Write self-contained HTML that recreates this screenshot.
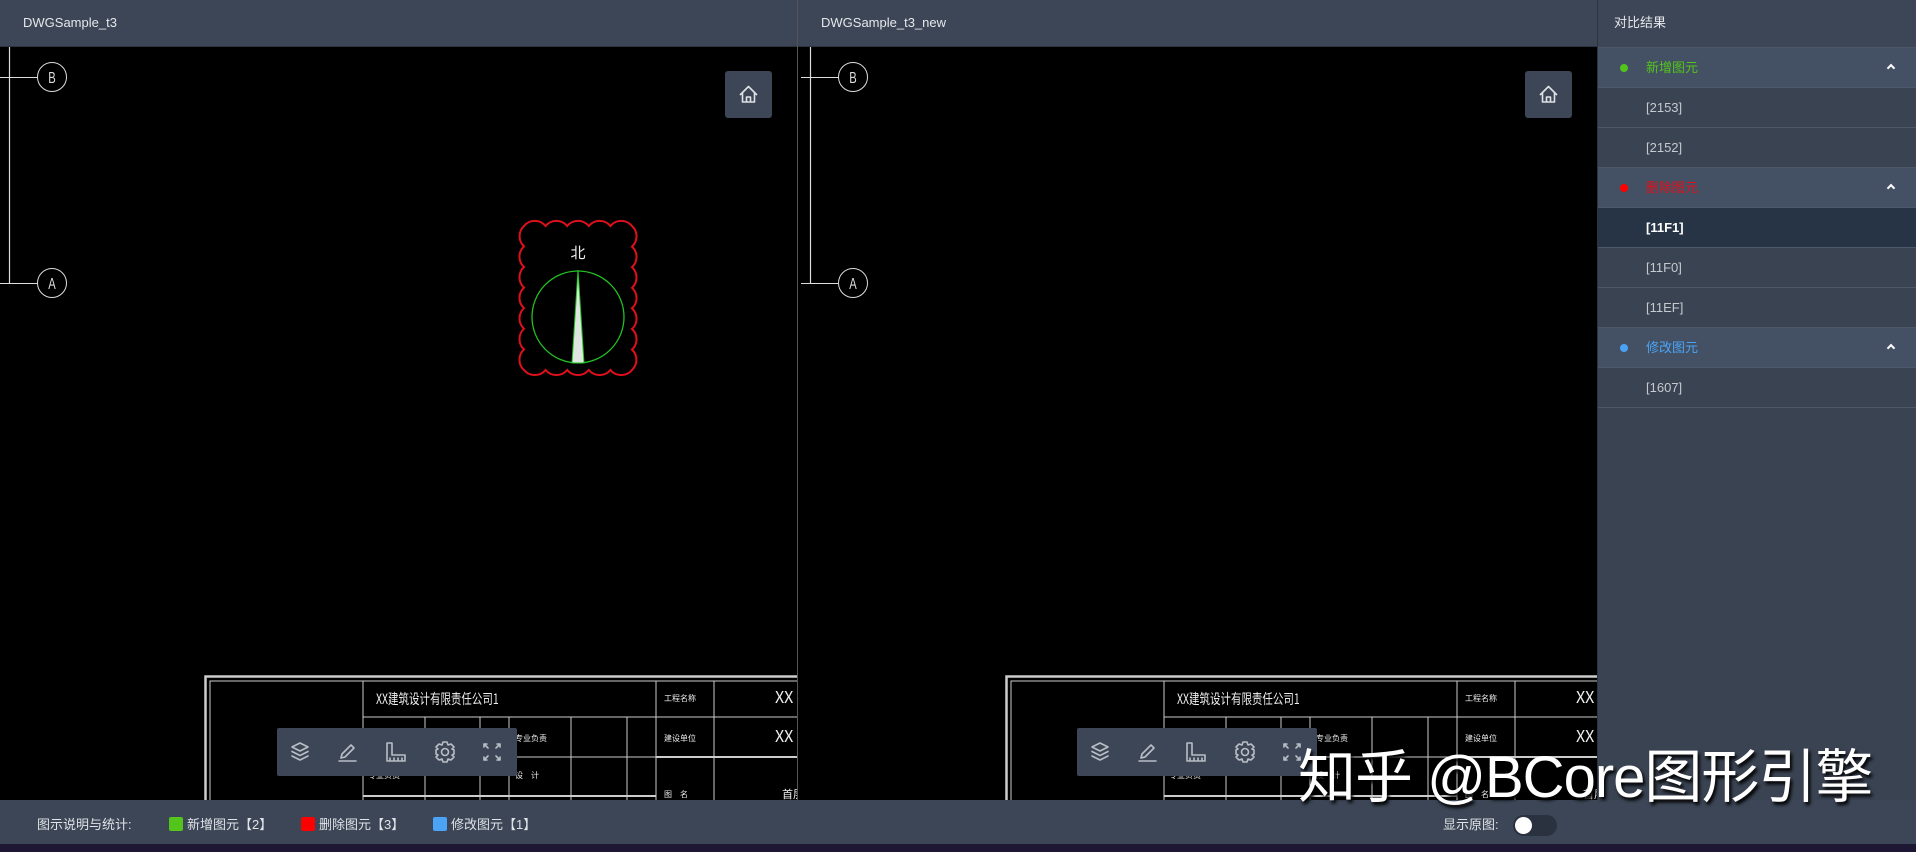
<!DOCTYPE html>
<html><head><meta charset="utf-8">
<style>
*{margin:0;padding:0;box-sizing:border-box}
body{width:1916px;height:852px;overflow:hidden;background:#000;font-family:"Liberation Sans","Noto Sans CJK SC",sans-serif;position:relative}
.hdr{position:absolute;top:0;height:47px;background:#3c4656;color:#e6e8eb;font-size:13px;line-height:46px;padding-left:23px;border-bottom:1px solid #2c3440}
.canvas{position:absolute;top:47px;height:753px;overflow:hidden;background:#000}
.home{position:absolute;width:47px;height:47px;background:#3c4656;border-radius:3px}
.tb{position:absolute;left:277px;top:681px;width:240px;height:48px;background:#3c4656;border-radius:2px}
.side{position:absolute;left:1597px;top:0;width:319px;height:800px;background:#3a4352;border-left:1px solid #2c3440}
.side .h{height:48px;line-height:46px;padding-left:16px;color:#e6e8eb;font-size:13px;background:#3c4656;border-bottom:1px solid #4b5666}
.row{height:40px;line-height:39px;border-bottom:1px solid #4d5868;font-size:13px;position:relative;padding-left:48px;color:#c6cad0}
.grp{background:#445164}
.grp .dot{position:absolute;left:22px;top:16px;width:8px;height:8px;border-radius:50%}
.grp .ch{position:absolute;right:22px;top:17px;width:6px;height:6px;border-left:2px solid #fff;border-top:2px solid #fff;transform:rotate(45deg)}
.sel{background:#273446;color:#fff;font-weight:bold}
.bot{position:absolute;left:0;top:800px;width:1916px;height:44px;background:#3c4656;color:#e0e3e7;font-size:13px}
.strip{position:absolute;left:0;top:844px;width:1916px;height:8px;background:#1d1733}
.sq{display:inline-block;width:14px;height:14px;vertical-align:-2px;margin-right:4px;border-radius:2px}
.wm{position:absolute;left:1298px;top:730px;font-size:58px;color:#fff;text-shadow:2px 3px 3px #000;white-space:nowrap;letter-spacing:-1px}
</style></head><body>

<div class="hdr" style="left:0;width:797px">DWGSample_t3</div>
<div class="hdr" style="left:798px;width:799px">DWGSample_t3_new</div>
<div style="position:absolute;left:797px;top:0;width:1px;height:800px;background:#555"></div>

<!-- left canvas -->
<div class="canvas" style="left:0;width:797px">
<svg width="797" height="753" viewBox="0 47 797 753" style="position:absolute;left:0;top:0">
<g id="base">
<line x1="9.5" y1="47" x2="9.5" y2="283" stroke="#ddd" stroke-width="1.2"/>
<line x1="0" y1="77.5" x2="38" y2="77.5" stroke="#ddd"/>
<line x1="0" y1="283.5" x2="38" y2="283.5" stroke="#ddd"/>
<circle cx="52" cy="77" r="14.5" fill="none" stroke="#ddd"/>
<circle cx="52" cy="283" r="14.5" fill="none" stroke="#ddd"/>
<text x="52" y="83" fill="#ddd" font-size="16" text-anchor="middle" transform="translate(52 0) scale(.7 1) translate(-52 0)">B</text>
<text x="52" y="289" fill="#ddd" font-size="16" text-anchor="middle" transform="translate(52 0) scale(.7 1) translate(-52 0)">A</text>
<g stroke="#ccc" fill="none">
<rect x="205.5" y="676.5" width="700" height="200" stroke-width="2.5"/>
<rect x="210" y="681" width="700" height="200" stroke-width="1"/>
<line x1="363" y1="681" x2="363" y2="800"/>
<line x1="656" y1="681" x2="656" y2="800"/>
<line x1="714" y1="681" x2="714" y2="800"/>
<line x1="363" y1="717" x2="800" y2="717"/>
<line x1="656" y1="757" x2="800" y2="757" stroke-width="2"/>
<line x1="363" y1="796" x2="656" y2="796" stroke-width="2"/>
<line x1="425" y1="717" x2="425" y2="800"/>
<line x1="480" y1="717" x2="480" y2="800"/>
<line x1="509" y1="717" x2="509" y2="800"/>
<line x1="571" y1="717" x2="571" y2="800"/>
<line x1="627" y1="717" x2="627" y2="800"/>
<line x1="509" y1="757" x2="656" y2="757"/>
</g>
<g fill="#eee" font-family="Noto Sans CJK SC,sans-serif">
<text x="376" y="704" font-size="14" transform="translate(376 0) scale(.75 1) translate(-376 0)">XX建筑设计有限责任公司1</text>
<text x="664" y="701" font-size="8">工程名称</text>
<text x="664" y="741" font-size="8">建设单位</text>
<text x="515" y="741" font-size="8">专业负责</text>
<text x="515" y="778" font-size="8">设　计</text>
<text x="368" y="778" font-size="8">专业负责</text>
<text x="664" y="797" font-size="8">图　名</text>
<text x="775" y="703" font-size="16">XX</text>
<text x="775" y="742" font-size="16">XX</text>
<text x="782" y="798" font-size="11">首层</text>
</g>
</g>
<path d="M524 226 a14 14 0 0 1 21.6 0 a14 14 0 0 1 21.6 0 a14 14 0 0 1 21.6 0 a14 14 0 0 1 21.6 0 a14 14 0 0 1 21.6 0 a14 14 0 0 1 0 20.6 a14 14 0 0 1 0 20.6 a14 14 0 0 1 0 20.6 a14 14 0 0 1 0 20.6 a14 14 0 0 1 0 20.6 a14 14 0 0 1 0 20.6 a14 14 0 0 1 0 20.4 a14 14 0 0 1 -21.6 0 a14 14 0 0 1 -21.6 0 a14 14 0 0 1 -21.6 0 a14 14 0 0 1 -21.6 0 a14 14 0 0 1 -21.6 0 a14 14 0 0 1 0 -20.6 a14 14 0 0 1 0 -20.6 a14 14 0 0 1 0 -20.6 a14 14 0 0 1 0 -20.6 a14 14 0 0 1 0 -20.6 a14 14 0 0 1 0 -20.6 a14 14 0 0 1 0 -20.4 Z" fill="none" stroke="#e0101a" stroke-width="2"/>
<text x="578" y="258" fill="#eee" font-size="15" text-anchor="middle" font-family="Noto Sans CJK SC,sans-serif">北</text>
<circle cx="578" cy="317" r="46" fill="none" stroke="#22c022" stroke-width="1.3"/>
<path d="M578 270 L584 363 L572 363 Z" fill="#dfe6df" stroke="#22c022" stroke-width="1"/>
</svg>
<div class="home" style="left:725px;top:24px"><svg width="47" height="47"><path d="M15 24 L23.5 15.5 L32 24 M17.5 22 V31 H29.5 V22 M21.5 31 V26 H25.5 V31" fill="none" stroke="#dfe2e6" stroke-width="1.6" stroke-linejoin="round"/></svg></div>
</div>

<!-- right canvas -->
<div class="canvas" style="left:798px;width:799px">
<svg width="799" height="753" viewBox="-3 47 799 753" style="position:absolute;left:0;top:0"><use href="#base"/></svg>
<div class="home" style="left:727px;top:24px"><svg width="47" height="47"><path d="M15 24 L23.5 15.5 L32 24 M17.5 22 V31 H29.5 V22 M21.5 31 V26 H25.5 V31" fill="none" stroke="#dfe2e6" stroke-width="1.6" stroke-linejoin="round"/></svg></div>
</div>

<!-- toolbars -->
<div class="tb" style="top:728px">
<svg width="240" height="48" fill="none" stroke="#b9bec6" stroke-width="1.6" stroke-linejoin="round" stroke-linecap="round">
<path d="M15 19 L23 15 L31 19 L23 23 Z M15 23.5 L23 27.5 L31 23.5 M15 28 L23 32 L31 28"/>
<path d="M64 30 L65 26 L74 17 L77 20 L68 29 Z M62 33 H79"/>
<path d="M110 15 V33 H128 V27 H115 V15 Z M113 33 V30 M117 33 V30 M121 33 V30 M125 33 V30"/>
<circle cx="168" cy="24" r="3.5"/><path d="M166 14 H170 L171 17 L174 16 L177 19 L175 21 L177 22 V26 L175 27 L177 29 L174 32 L171 31 L170 34 H166 L165 31 L162 32 L159 29 L161 27 L159 26 V22 L161 21 L159 19 L162 16 L165 17 Z"/>
<path d="M207 16 L211 20 M207 16 V19 M207 16 H210 M223 16 L219 20 M223 16 V19 M223 16 H220 M207 32 L211 28 M207 32 V29 M207 32 H210 M223 32 L219 28 M223 32 V29 M223 32 H220"/>
</svg></div>
<div class="tb" style="left:1077px;top:728px">
<svg width="240" height="48" fill="none" stroke="#b9bec6" stroke-width="1.6" stroke-linejoin="round" stroke-linecap="round">
<path d="M15 19 L23 15 L31 19 L23 23 Z M15 23.5 L23 27.5 L31 23.5 M15 28 L23 32 L31 28"/>
<path d="M64 30 L65 26 L74 17 L77 20 L68 29 Z M62 33 H79"/>
<path d="M110 15 V33 H128 V27 H115 V15 Z M113 33 V30 M117 33 V30 M121 33 V30 M125 33 V30"/>
<circle cx="168" cy="24" r="3.5"/><path d="M166 14 H170 L171 17 L174 16 L177 19 L175 21 L177 22 V26 L175 27 L177 29 L174 32 L171 31 L170 34 H166 L165 31 L162 32 L159 29 L161 27 L159 26 V22 L161 21 L159 19 L162 16 L165 17 Z"/>
<path d="M207 16 L211 20 M207 16 V19 M207 16 H210 M223 16 L219 20 M223 16 V19 M223 16 H220 M207 32 L211 28 M207 32 V29 M207 32 H210 M223 32 L219 28 M223 32 V29 M223 32 H220"/>
</svg></div>

<!-- sidebar -->
<div class="side">
<div class="h">对比结果</div>
<div class="row grp" style="color:#52c41a"><span class="dot" style="background:#52c41a"></span>新增图元<span class="ch"></span></div>
<div class="row">[2153]</div>
<div class="row">[2152]</div>
<div class="row grp" style="color:#e0101a"><span class="dot" style="background:#f00"></span>删除图元<span class="ch"></span></div>
<div class="row sel">[11F1]</div>
<div class="row">[11F0]</div>
<div class="row">[11EF]</div>
<div class="row grp" style="color:#4aa3f5"><span class="dot" style="background:#4aa3f5"></span>修改图元<span class="ch"></span></div>
<div class="row">[1607]</div>
</div>

<!-- bottom -->
<div class="bot">
<div style="position:absolute;left:37px;top:14px">图示说明与统计:</div>
<div style="position:absolute;left:169px;top:14px"><span class="sq" style="background:#52c41a"></span>新增图元【2】</div>
<div style="position:absolute;left:301px;top:14px"><span class="sq" style="background:#f00"></span>删除图元【3】</div>
<div style="position:absolute;left:433px;top:14px"><span class="sq" style="background:#4aa3f5"></span>修改图元【1】</div>
<div style="position:absolute;left:1443px;top:14px">显示原图:</div>
<div style="position:absolute;left:1513px;top:15px;width:44px;height:21px;border-radius:11px;background:#2a3240"><div style="position:absolute;left:2px;top:2px;width:17px;height:17px;border-radius:50%;background:#fff"></div></div>
</div>
<div class="strip"></div>

<div class="wm">知乎 @BCore图形引擎</div>
</body></html>
